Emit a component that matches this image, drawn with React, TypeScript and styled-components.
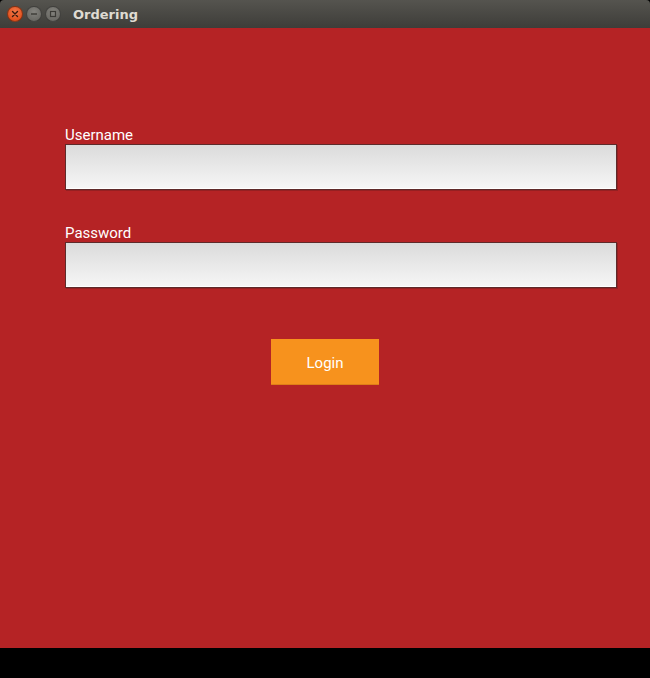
import React from "react";
import styled, { createGlobalStyle } from "styled-components";

const Global = createGlobalStyle`
  html, body { margin: 0; padding: 0; background: #000; }
  body { width: 650px; height: 678px; overflow: hidden; }
  * { box-sizing: border-box; }
`;

const Window = styled.div`
  width: 650px;
  height: 678px;
  display: flex;
  flex-direction: column;
  background: #000;
`;

const TitleBar = styled.div`
  height: 28px;
  flex: none;
  display: flex;
  align-items: center;
  padding-left: 7px;
  background: linear-gradient(#55544f, #3e3d39);
  border-radius: 4px 4px 0 0;
`;

const Controls = styled.div`
  display: flex;
  gap: 3px;
  align-items: center;
`;

const Circle = styled.div<{ $close?: boolean }>`
  width: 16px;
  height: 16px;
  border-radius: 50%;
  display: flex;
  align-items: center;
  justify-content: center;
  border: 1px solid rgba(0, 0, 0, 0.4);
  background: ${(p) =>
    p.$close
      ? "radial-gradient(circle at 50% 35%, #f3794a, #e4531f 70%, #cc4713)"
      : "radial-gradient(circle at 50% 35%, #84837e, #6c6b66 70%, #5f5e59)"};
`;

const Title = styled.div`
  margin-left: 12px;
  font-family: "DejaVu Sans", "Liberation Sans", sans-serif;
  font-weight: bold;
  font-size: 13px;
  color: #dfdbd2;
`;

const Content = styled.div`
  height: 620px;
  flex: none;
  background: #b52325;
  padding: 99px 33px 0 65px;
  display: flex;
  flex-direction: column;
  font-family: Roboto, "Liberation Sans", sans-serif;
`;

const Field = styled.div<{ $gap?: number }>`
  display: flex;
  flex-direction: column;
  margin-top: ${(p) => p.$gap ?? 0}px;
`;

const Label = styled.label`
  color: #fff;
  font-size: 15px;
  line-height: 17px;
  height: 17px;
`;

const Input = styled.input`
  width: 552px;
  height: 46px;
  border: 1px solid #5e2a2a;
  outline: none;
  background: linear-gradient(#dbdbdb, #f6f6f6);
  box-shadow: inset 0 -1px 0 #ffffff, 1px 1px 0 rgba(90, 30, 30, 0.35);
  font-family: Roboto, "Liberation Sans", sans-serif;
  font-size: 14px;
  padding: 0 8px;
`;

const ButtonRow = styled.div`
  margin-top: 51px;
  display: flex;
  justify-content: flex-start;
  padding-left: 206px;
`;

const LoginButton = styled.button`
  width: 108px;
  height: 46px;
  border: none;
  border-bottom: 1px solid #df7f18;
  background: #f7921d;
  color: #fff;
  font-family: Roboto, "Liberation Sans", sans-serif;
  font-size: 15px;
  line-height: 46px;
  cursor: pointer;
  padding: 1px 0 0;
`;

const Footer = styled.div`
  flex: 1;
  background: #000;
`;

export default function App() {
  return (
    <>
      <Global />
      <Window>
        <TitleBar>
          <Controls>
            <Circle $close>
              <svg width="8" height="8" viewBox="0 0 8 8">
                <path d="M1.5 1.5 L6.5 6.5 M6.5 1.5 L1.5 6.5" stroke="#3a1a0e" strokeWidth="1.4" strokeLinecap="round" />
              </svg>
            </Circle>
            <Circle>
              <svg width="8" height="8" viewBox="0 0 8 8">
                <path d="M1 4 H7" stroke="#3b3a36" strokeWidth="1.4" />
              </svg>
            </Circle>
            <Circle>
              <svg width="8" height="8" viewBox="0 0 8 8">
                <rect x="1.5" y="1.5" width="5" height="5" fill="none" stroke="#3b3a36" strokeWidth="1.2" />
              </svg>
            </Circle>
          </Controls>
          <Title>Ordering</Title>
        </TitleBar>
        <Content>
          <Field>
            <Label>Username</Label>
            <Input type="text" />
          </Field>
          <Field $gap={35}>
            <Label>Password</Label>
            <Input type="password" />
          </Field>
          <ButtonRow>
            <LoginButton>Login</LoginButton>
          </ButtonRow>
        </Content>
        <Footer />
      </Window>
    </>
  );
}
